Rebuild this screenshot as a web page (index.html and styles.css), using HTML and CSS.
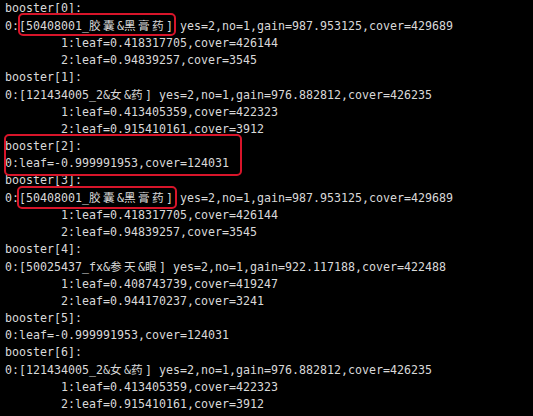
FILE: index.html
```html
<!DOCTYPE html>
<html>
<head>
<meta charset="utf-8">
<link rel="stylesheet" href="styles.css">
</head>
<body>
<div class="term">
<pre class="out">booster[0]:
0:[50408001_<span class="cjk">胶囊</span>&amp;<span class="cjk">黑膏药</span>] yes=2,no=1,gain=987.953125,cover=429689
        1:leaf=0.418317705,cover=426144
        2:leaf=0.94839257,cover=3545
booster[1]:
0:[121434005_2&amp;<span class="cjk">女</span>&amp;<span class="cjk">药</span>] yes=2,no=1,gain=976.882812,cover=426235
        1:leaf=0.413405359,cover=422323
        2:leaf=0.915410161,cover=3912
booster[2]:
0:leaf=-0.999991953,cover=124031
booster[3]:
0:[50408001_<span class="cjk">胶囊</span>&amp;<span class="cjk">黑膏药</span>] yes=2,no=1,gain=987.953125,cover=429689
        1:leaf=0.418317705,cover=426144
        2:leaf=0.94839257,cover=3545
booster[4]:
0:[50025437_fx&amp;<span class="cjk">参天</span>&amp;<span class="cjk">眼</span>] yes=2,no=1,gain=922.117188,cover=422488
        1:leaf=0.408743739,cover=419247
        2:leaf=0.944170237,cover=3241
booster[5]:
0:leaf=-0.999991953,cover=124031
booster[6]:
0:[121434005_2&amp;<span class="cjk">女</span>&amp;<span class="cjk">药</span>] yes=2,no=1,gain=976.882812,cover=426235
        1:leaf=0.413405359,cover=422323
        2:leaf=0.915410161,cover=3912
booster[7]:</pre>
<div class="mark mark-a"></div>
<div class="mark mark-b"></div>
<div class="mark mark-c"></div>
</div>
</body>
</html>
```
FILE: styles.css
```css
html, body {
  margin: 0;
  padding: 0;
  background: #000;
  overflow: hidden;
}
.term {
  position: relative;
  width: 533px;
  height: 416px;
  overflow: hidden;
  background: #000;
}
.out {
  margin: 0;
  padding: 0 0 0 5px;
  font-family: "DejaVu Sans Mono", "Noto Sans CJK SC", monospace;
  font-size: 11.63px;
  line-height: 17px;
  color: #d9d9d9;
  white-space: pre;
}
.cjk {
  font-family: "Noto Sans CJK SC", sans-serif;
  letter-spacing: 2.37px;
}
.mark {
  position: absolute;
  border: 2px solid #d8152a;
  border-radius: 5px;
  box-sizing: border-box;
}
.mark-a {
  left: 18px;
  top: 13px;
  width: 158px;
  height: 23px;
}
.mark-b {
  left: 4px;
  top: 134px;
  width: 238px;
  height: 42px;
}
.mark-c {
  left: 17px;
  top: 186px;
  width: 160px;
  height: 23px;
}
```
